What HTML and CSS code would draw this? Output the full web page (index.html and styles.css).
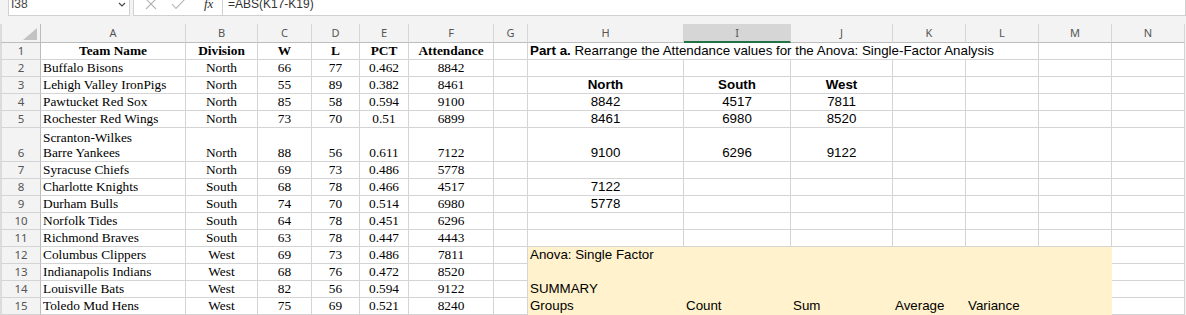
FILE: index.html
```html
<!DOCTYPE html>
<html lang="en">
<head>
    <meta charset="UTF-8">
    <title>Attendance - Anova</title>
    <link rel="stylesheet" href="styles.css">
</head>
<body>
    <!-- Formula bar (top part cut off by the window) -->
    <div class="formula-bar">
        <div class="name-box">
            <span>I38</span>
            <svg class="chevron" width="8" height="5" viewBox="0 0 8 5"><path d="M1 1 L4 4 L7 1" fill="none" stroke="#444" stroke-width="1.1"/></svg>
        </div>
        <div class="fx-tools">
            <svg class="tool-x" width="12" height="12" viewBox="0 0 12 12"><path d="M1 1 L11 11 M11 1 L1 11" stroke="#b4b4b4" stroke-width="1.1"/></svg>
            <svg class="tool-check" width="15" height="12" viewBox="0 0 15 12"><path d="M1 6 L5 10.5 L14 1" fill="none" stroke="#b4b4b4" stroke-width="1.1"/></svg>
            <span class="fx">fx</span>
        </div>
        <div class="formula-input">=ABS(K17-K19)</div>
    </div>

    <table class="sheet">
        <colgroup>
            <col style="width:41px">
            <col style="width:145px">
            <col style="width:72px">
            <col style="width:54px">
            <col style="width:48px">
            <col style="width:49px">
            <col style="width:85px">
            <col style="width:34px">
            <col style="width:156px">
            <col style="width:107px">
            <col style="width:102px">
            <col style="width:73px">
            <col style="width:73px">
            <col style="width:73px">
            <col style="width:73px">
        </colgroup>
        <thead>
            <tr class="col-heads">
                <th class="corner"><svg width="14" height="12" viewBox="0 0 14 12"><path d="M14 0 L14 12 L0 12 Z" fill="#c3c3c3"/></svg></th>
                <th>A</th><th>B</th><th>C</th><th>D</th><th>E</th><th>F</th><th>G</th>
                <th>H</th><th class="selected">I</th><th>J</th><th>K</th><th>L</th><th>M</th><th>N</th>
            </tr>
        </thead>
        <tbody>
            <tr class="bold-row">
                <td class="rh">1</td>
                <td class="serif ctr">Team Name</td><td class="serif ctr">Division</td><td class="serif ctr">W</td>
                <td class="serif ctr">L</td><td class="serif ctr">PCT</td><td class="serif ctr">Attendance</td>
                <td></td>
                <td colspan="5" class="sans note"><b>Part a.</b> Rearrange the Attendance values for the Anova: Single-Factor Analysis</td>
                <td></td><td></td>
            </tr>
            <tr>
                <td class="rh">2</td>
                <td class="serif">Buffalo Bisons</td><td class="serif ctr">North</td><td class="serif ctr">66</td>
                <td class="serif ctr">77</td><td class="serif ctr">0.462</td><td class="serif ctr">8842</td>
                <td></td><td></td><td></td><td></td><td></td><td></td><td></td><td></td>
            </tr>
            <tr>
                <td class="rh">3</td>
                <td class="serif">Lehigh Valley IronPigs</td><td class="serif ctr">North</td><td class="serif ctr">55</td>
                <td class="serif ctr">89</td><td class="serif ctr">0.382</td><td class="serif ctr">8461</td>
                <td></td>
                <td class="sans ctr"><b>North</b></td><td class="sans ctr"><b>South</b></td><td class="sans ctr"><b>West</b></td>
                <td></td><td></td><td></td><td></td>
            </tr>
            <tr>
                <td class="rh">4</td>
                <td class="serif">Pawtucket Red Sox</td><td class="serif ctr">North</td><td class="serif ctr">85</td>
                <td class="serif ctr">58</td><td class="serif ctr">0.594</td><td class="serif ctr">9100</td>
                <td></td>
                <td class="sans ctr">8842</td><td class="sans ctr">4517</td><td class="sans ctr">7811</td>
                <td></td><td></td><td></td><td></td>
            </tr>
            <tr>
                <td class="rh">5</td>
                <td class="serif">Rochester Red Wings</td><td class="serif ctr">North</td><td class="serif ctr">73</td>
                <td class="serif ctr">70</td><td class="serif ctr">0.51</td><td class="serif ctr">6899</td>
                <td></td>
                <td class="sans ctr">8461</td><td class="sans ctr">6980</td><td class="sans ctr">8520</td>
                <td></td><td></td><td></td><td></td>
            </tr>
            <tr class="tall">
                <td class="rh">6</td>
                <td class="serif">Scranton-Wilkes<br>Barre Yankees</td><td class="serif ctr">North</td><td class="serif ctr">88</td>
                <td class="serif ctr">56</td><td class="serif ctr">0.611</td><td class="serif ctr">7122</td>
                <td></td>
                <td class="sans ctr">9100</td><td class="sans ctr">6296</td><td class="sans ctr">9122</td>
                <td></td><td></td><td></td><td></td>
            </tr>
            <tr>
                <td class="rh">7</td>
                <td class="serif">Syracuse Chiefs</td><td class="serif ctr">North</td><td class="serif ctr">69</td>
                <td class="serif ctr">73</td><td class="serif ctr">0.486</td><td class="serif ctr">5778</td>
                <td></td><td></td><td></td><td></td><td></td><td></td><td></td><td></td>
            </tr>
            <tr>
                <td class="rh">8</td>
                <td class="serif">Charlotte Knights</td><td class="serif ctr">South</td><td class="serif ctr">68</td>
                <td class="serif ctr">78</td><td class="serif ctr">0.466</td><td class="serif ctr">4517</td>
                <td></td>
                <td class="sans ctr">7122</td>
                <td></td><td></td><td></td><td></td><td></td><td></td>
            </tr>
            <tr>
                <td class="rh">9</td>
                <td class="serif">Durham Bulls</td><td class="serif ctr">South</td><td class="serif ctr">74</td>
                <td class="serif ctr">70</td><td class="serif ctr">0.514</td><td class="serif ctr">6980</td>
                <td></td>
                <td class="sans ctr">5778</td>
                <td></td><td></td><td></td><td></td><td></td><td></td>
            </tr>
            <tr>
                <td class="rh">10</td>
                <td class="serif">Norfolk Tides</td><td class="serif ctr">South</td><td class="serif ctr">64</td>
                <td class="serif ctr">78</td><td class="serif ctr">0.451</td><td class="serif ctr">6296</td>
                <td></td><td></td><td></td><td></td><td></td><td></td><td></td><td></td>
            </tr>
            <tr>
                <td class="rh">11</td>
                <td class="serif">Richmond Braves</td><td class="serif ctr">South</td><td class="serif ctr">63</td>
                <td class="serif ctr">78</td><td class="serif ctr">0.447</td><td class="serif ctr">4443</td>
                <td></td><td></td><td></td><td></td><td></td><td></td><td></td><td></td>
            </tr>
            <tr>
                <td class="rh">12</td>
                <td class="serif">Columbus Clippers</td><td class="serif ctr">West</td><td class="serif ctr">69</td>
                <td class="serif ctr">73</td><td class="serif ctr">0.486</td><td class="serif ctr">7811</td>
                <td></td>
                <td class="sans fill">Anova: Single Factor</td>
                <td class="fill"></td><td class="fill"></td><td class="fill"></td><td class="fill"></td><td class="fill"></td>
                <td></td>
            </tr>
            <tr>
                <td class="rh">13</td>
                <td class="serif">Indianapolis Indians</td><td class="serif ctr">West</td><td class="serif ctr">68</td>
                <td class="serif ctr">76</td><td class="serif ctr">0.472</td><td class="serif ctr">8520</td>
                <td></td>
                <td class="fill"></td><td class="fill"></td><td class="fill"></td><td class="fill"></td><td class="fill"></td><td class="fill"></td>
                <td></td>
            </tr>
            <tr>
                <td class="rh">14</td>
                <td class="serif">Louisville Bats</td><td class="serif ctr">West</td><td class="serif ctr">82</td>
                <td class="serif ctr">56</td><td class="serif ctr">0.594</td><td class="serif ctr">9122</td>
                <td></td>
                <td class="sans fill">SUMMARY</td>
                <td class="fill"></td><td class="fill"></td><td class="fill"></td><td class="fill"></td><td class="fill"></td>
                <td></td>
            </tr>
            <tr>
                <td class="rh">15</td>
                <td class="serif">Toledo Mud Hens</td><td class="serif ctr">West</td><td class="serif ctr">75</td>
                <td class="serif ctr">69</td><td class="serif ctr">0.521</td><td class="serif ctr">8240</td>
                <td></td>
                <td class="sans fill">Groups</td><td class="sans fill">Count</td><td class="sans fill">Sum</td>
                <td class="sans fill">Average</td><td class="sans fill">Variance</td><td class="fill"></td>
                <td></td>
            </tr>
        </tbody>
    </table>
</body>
</html>
```

FILE: styles.css
```css
* {
    margin: 0;
    padding: 0;
    box-sizing: border-box;
}

body {
    width: 1186px;
    height: 315px;
    overflow: hidden;
    background: #f3f3f3;
    font-family: "Liberation Sans", Arial, sans-serif;
    color: #000;
}

/* Formula bar */
.formula-bar {
    display: flex;
    align-items: flex-end;
    height: 16px;
    overflow: hidden;
    margin-bottom: 8px;
}

.name-box,
.fx-tools,
.formula-input {
    height: 24px;
    background: #fff;
    border: 1px solid #d0d0d0;
}

.name-box {
    display: flex;
    align-items: center;
    justify-content: space-between;
    width: 122px;
    margin-left: 8px;
    padding: 0 3px 0 2px;
    font-size: 12px;
    color: #444;
}

.fx-tools {
    display: flex;
    align-items: center;
    width: 89px;
    margin-left: 3px;
    border-right: none;
}

.tool-x {
    margin-left: 11px;
}

.tool-check {
    margin-left: 14px;
}

.fx {
    margin-left: 18px;
    font-family: "Liberation Serif", serif;
    font-style: italic;
    font-size: 13px;
    color: #333;
}

.formula-input {
    flex: 1;
    padding-left: 5px;
    font-size: 12px;
    line-height: 22px;
    color: #333;
}

/* Sheet grid */
.sheet {
    table-layout: fixed;
    width: 1185px;
    border-collapse: separate;
    border-spacing: 0;
    background: #fff;
}

.sheet tr {
    height: 17px;
}

.sheet tr.col-heads {
    height: 18px;
}

.sheet tr.tall {
    height: 34px;
}

.sheet th {
    padding: 0;
    background: #f3f3f3;
    border-right: 1px solid #d6d6d6;
    border-bottom: 1px solid #bdbdbd;
    font-family: "Noto Sans", sans-serif;
    font-weight: normal;
    font-size: 11px;
    line-height: 16px;
    color: #555;
    text-align: center;
    vertical-align: middle;
}

.sheet th.corner {
    text-align: right;
    vertical-align: bottom;
    padding: 0 3px 2px 0;
    border-left: 2px solid #dcdcdc;
    border-right-color: #bdbdbd;
}

.sheet th.corner svg {
    display: inline-block;
    vertical-align: bottom;
}

.sheet th.selected {
    background: #d6d6d6;
    border-bottom: 2px solid #217346;
}

.sheet td {
    padding: 0 2px 1px;
    border-right: 1px solid #d4d4d4;
    border-bottom: 1px solid #d4d4d4;
    font-size: 13.33px;
    line-height: 15px;
    white-space: nowrap;
    vertical-align: bottom;
    overflow: hidden;
}

.sheet td.rh {
    padding: 0 0 1px;
    background: #f3f3f3;
    border-left: 2px solid #dcdcdc;
    border-right-color: #bdbdbd;
    font-family: "Noto Sans", sans-serif;
    font-size: 11.5px;
    color: #555;
    text-align: center;
}

.serif {
    font-family: "Liberation Serif", "Times New Roman", serif;
}

.sans {
    font-family: "Liberation Sans", Arial, sans-serif;
}

.ctr {
    text-align: center;
}

.bold-row .serif {
    font-weight: bold;
}

.note {
    padding-left: 2px;
}

.fill {
    background: #fff2cc;
    border-right-color: #fff2cc !important;
    border-bottom-color: #fff2cc !important;
}
```
